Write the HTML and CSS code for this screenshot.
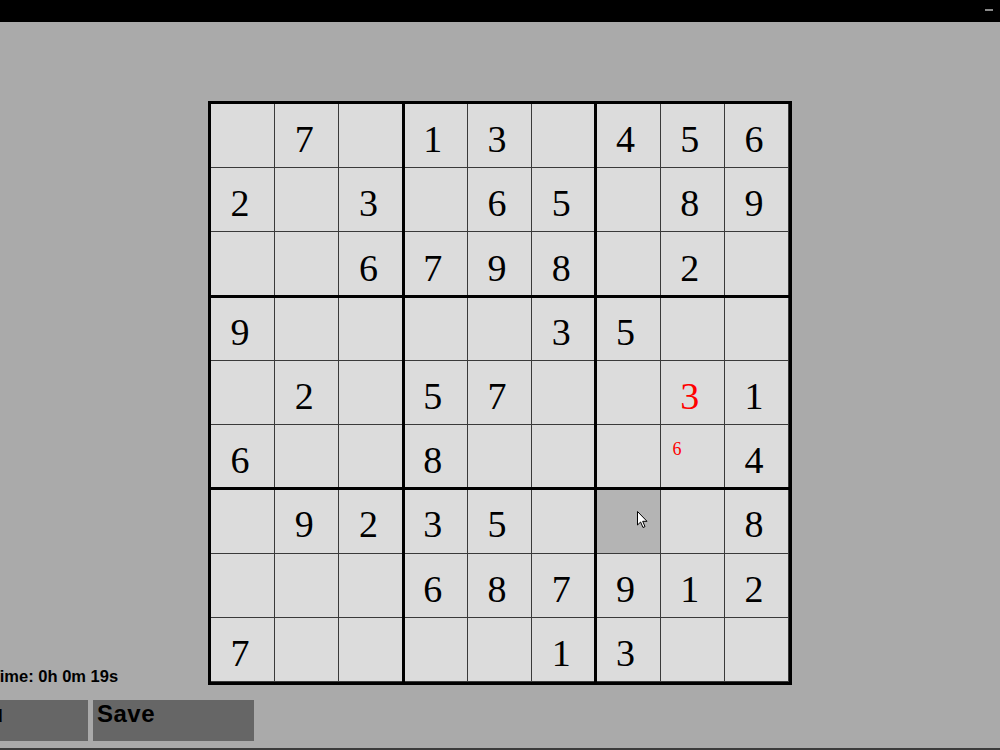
FILE: index.html
```html
<!DOCTYPE html>
<html lang="en">
<head>
  <meta charset="UTF-8" />
  <title>Sudoku</title>
  <link rel="stylesheet" href="styles.css">
</head>
<body>

  <!-- Title bar -->
  <div class="titlebar">
    <span class="minimize"></span>
  </div>

  <!-- Board row -->
  <div class="board-row">
    <div class="side">
      <p class="timer">Time: 0h 0m 19s</p>
    </div>
    <div id="board" class="board">
      <!-- 3x3 box rules drawn over the cells -->
      <span class="rule rule-v v1"></span>
      <span class="rule rule-v v2"></span>
      <span class="rule rule-h h1"></span>
      <span class="rule rule-h h2"></span>
    </div>
    <div class="side"></div>
  </div>

  <!-- Buttons -->
  <div class="buttons">
    <button class="btn btn-menu">Menu</button>
    <button class="btn">Save</button>
  </div>
  <div class="bottom-edge"></div>

  <script>
    // 0 = empty cell
    const rows = [
      '070130456',
      '203065089',
      '006798020',
      '900003500',
      '020570031',
      '600800004',
      '092350008',
      '000687912',
      '700001300'
    ];
    const entered = { '4,7': true };   // player's own entries, shown red
    const pencil = { '5,7': '6' };     // pencil marks
    const hover = '6,6';

    const board = document.getElementById('board');
    rows.forEach((line, r) => {
      [...line].forEach((ch, c) => {
        const cell = document.createElement('div');
        cell.className = 'cell';
        const key = r + ',' + c;
        if (ch !== '0') {
          cell.textContent = ch;
          if (entered[key]) cell.classList.add('entered');
        }
        if (pencil[key]) {
          const note = document.createElement('span');
          note.className = 'note';
          note.textContent = pencil[key];
          cell.appendChild(note);
        }
        if (key === hover) {
          cell.classList.add('hover');
          cell.innerHTML = '<svg class="pointer" width="12" height="18" viewBox="0 0 12 18"><path d="M0.5 0.5 L0.5 14 L3.6 11 L6 16.5 L8 15.6 L5.7 10.3 L10 10.3 Z" fill="#fff" stroke="#000" stroke-width="1"/></svg>';
        }
        board.appendChild(cell);
      });
    });
  </script>
</body>
</html>
```

FILE: styles.css
```css
/* --- Reset & Layout --- */
* {
  box-sizing: border-box;
  margin: 0;
  padding: 0;
}
body {
  background: #aaaaaa;
  font-family: "Liberation Sans", Arial, sans-serif;
  width: 1000px;
  height: 750px;
  overflow: hidden;
}

/* --- Title bar --- */
.titlebar {
  height: 22px;
  background: #000;
  display: flex;
  justify-content: flex-end;
  padding: 9px 7px 0 0;
}
.minimize {
  width: 8px;
  height: 2px;
  background: #8a8a8a;
}

/* --- Board --- */
.board-row {
  display: grid;
  grid-template-columns: 1fr 584px 1fr;
  margin-top: 79px;
}
.side {
  display: flex;
  align-items: flex-end;
}
.timer {
  font-size: 16.5px;
  font-weight: bold;
  color: #000;
  margin-left: -10px;
  margin-bottom: -1px;
  white-space: nowrap;
}

.board {
  position: relative;
  width: 584px;
  height: 584px;
  border: 3px solid #000;
  background: #dcdcdc;
  display: grid;
  grid-template-columns: repeat(9, 1fr);
  grid-template-rows: repeat(9, 1fr);
}
.cell {
  position: relative;
  box-shadow: inset -1px -1px 0 #3a3a3a;
  display: flex;
  align-items: center;
  justify-content: center;
  padding: 6px 6px 0 0;
  font-family: "Liberation Serif", "Times New Roman", serif;
  font-size: 38px;
  color: #000;
}
.cell.entered { color: #ff0000; }
.cell.hover { background: #b4b4b4; }

.rule {
  position: absolute;
  background: #000;
  z-index: 2;
}
.rule-v {
  top: 0;
  bottom: 0;
  width: 3px;
}
.rule-h {
  left: 0;
  right: 0;
  height: 3px;
}
.v1 { left: calc(100% / 3 - 2px); }
.v2 { left: calc(200% / 3 - 2px); }
.h1 { top: calc(100% / 3 - 2px); }
.h2 { top: calc(200% / 3 - 2px); }

.note {
  position: absolute;
  left: 12px;
  top: 14px;
  font-size: 18px;
  color: #ff0000;
}
.pointer {
  position: absolute;
  left: 41px;
  top: 22px;
}

/* --- Buttons --- */
.buttons {
  display: flex;
  gap: 5px;
  margin-top: 15px;
  margin-left: -65px;
}
.btn {
  width: 161px;
  height: 41px;
  background: #666666;
  border: none;
  display: flex;
  align-items: flex-start;
  padding: 0 4px;
  font-family: "Liberation Sans", Arial, sans-serif;
  font-size: 24px;
  font-weight: bold;
  letter-spacing: 0.5px;
  color: #000;
}
.btn-menu {
  width: 153px;
}
.bottom-edge {
  margin-top: 7px;
  height: 2px;
  background: #3c3c3c;
}
```
